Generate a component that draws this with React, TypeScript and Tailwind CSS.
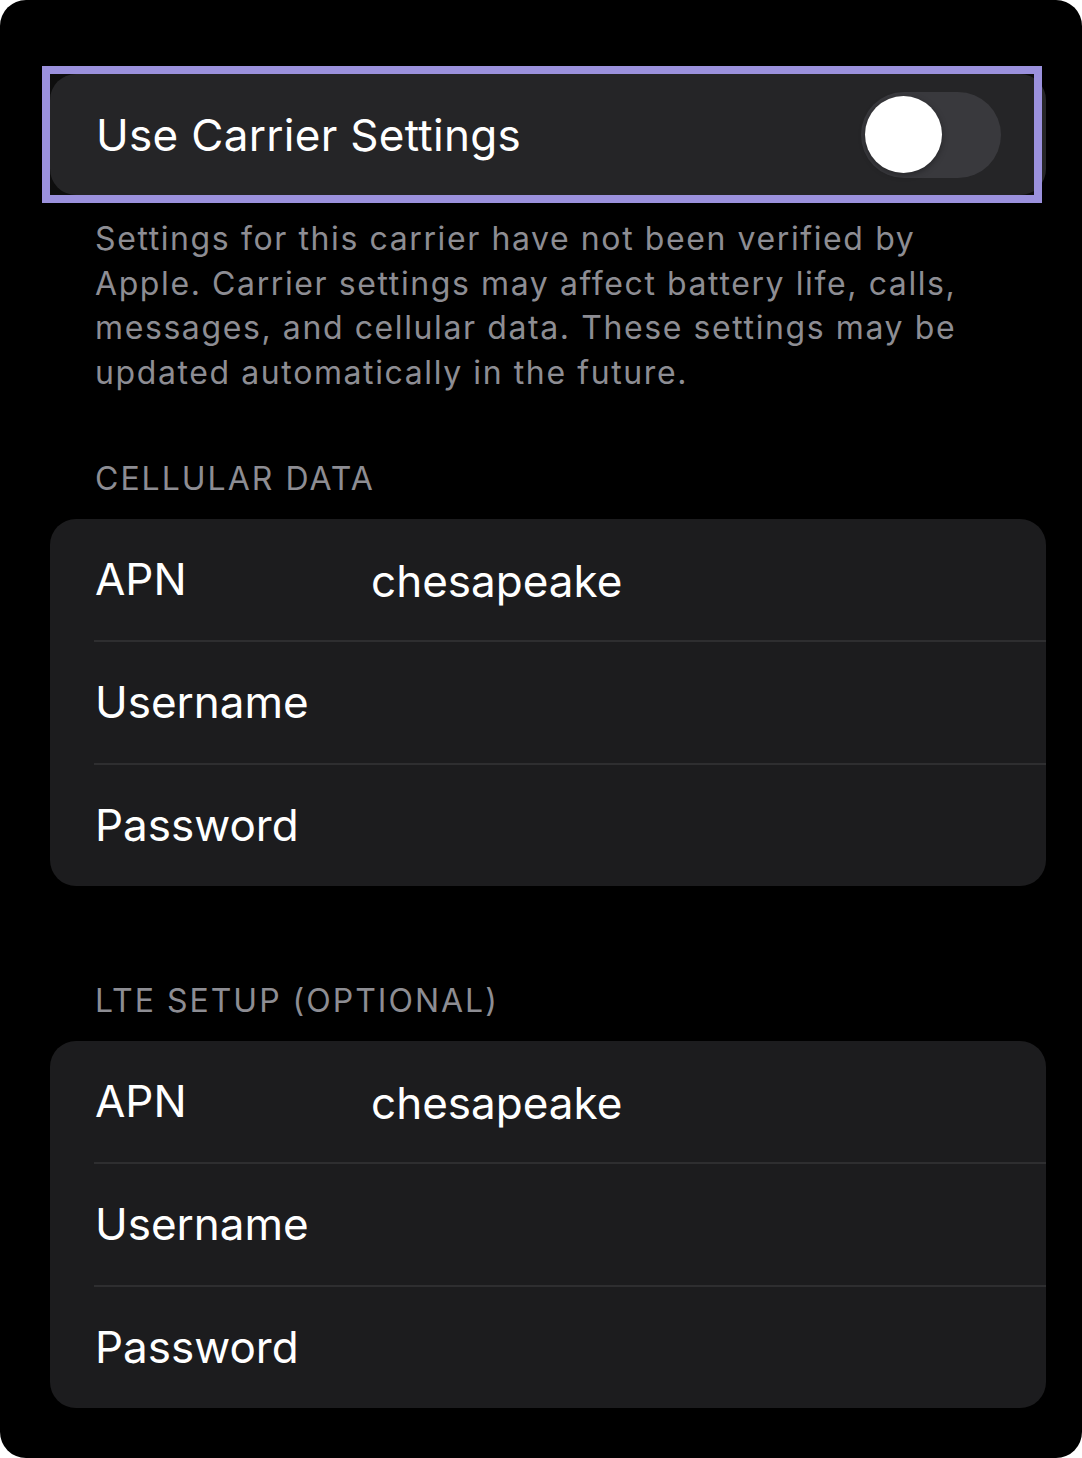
const font = { fontFamily: 'Inter, "Noto Sans", "Liberation Sans", sans-serif' };

type Row = { label: string; value?: string };

const cellular: Row[] = [
  { label: 'APN', value: 'chesapeake' },
  { label: 'Username' },
  { label: 'Password' },
];

const lte: Row[] = [
  { label: 'APN', value: 'chesapeake' },
  { label: 'Username' },
  { label: 'Password' },
];

function Toggle() {
  return (
    <div className="flex h-[86px] w-[140px] items-center rounded-full bg-[#39393d] px-[4px]">
      <div className="h-[77px] w-[77px] rounded-full bg-white shadow-[0_2px_6px_rgba(0,0,0,0.35)]" />
    </div>
  );
}

function Group({ title, rows }: { title: string; rows: Row[] }) {
  return (
    <div>
      <div className="pl-[95px] text-[32px] leading-[38px] tracking-[2px] text-[#8d8d93]">{title}</div>
      <div className="ml-[50px] mt-[21px] w-[996px] overflow-hidden rounded-[26px] bg-[#1c1c1e]">
        {rows.map((r, i) => (
          <div key={r.label + i}>
            {i > 0 && <div className="ml-[44px] h-[2px] bg-[#2e2e30]" />}
            <div className="flex h-[121px] items-center pl-[45px] text-[44px] text-white">
              <span className="w-[276px]">{r.label}</span>
              {r.value && <span className="pt-[3px]">{r.value}</span>}
            </div>
          </div>
        ))}
      </div>
    </div>
  );
}

export default function App() {
  return (
    <div className="min-h-[1458px] w-[1082px] bg-white" style={font}>
      <div className="h-[1458px] w-[1082px] overflow-hidden rounded-[26px] bg-black pt-[66px]">
        <div className="relative ml-[42px] h-[137px] w-[1000px] bg-[#0e0e0e] p-[8px]">
          <div className="flex h-[121px] w-[996px] items-center justify-between rounded-[26px] bg-[#252527] pl-[46px] pr-[45px]">
            <span className="text-[44px] tracking-[0.3px] text-white">Use Carrier Settings</span>
            <Toggle />
          </div>
          <div className="pointer-events-none absolute inset-0 border-[8px] border-[#9b91dd]" />
        </div>

        <p className="mt-[14px] whitespace-nowrap pl-[95px] text-[32px] leading-[44.7px] tracking-[1.6px] text-[#8d8d93]">
          Settings for this carrier have not been verified by
          <br />
          Apple. Carrier settings may affect battery life, calls,
          <br />
          messages, and cellular data. These settings may be
          <br />
          updated automatically in the future.
        </p>

        <div className="mt-[64px]">
          <Group title="CELLULAR DATA" rows={cellular} />
        </div>
        <div className="mt-[96px]">
          <Group title="LTE SETUP (OPTIONAL)" rows={lte} />
        </div>
      </div>
    </div>
  );
}
